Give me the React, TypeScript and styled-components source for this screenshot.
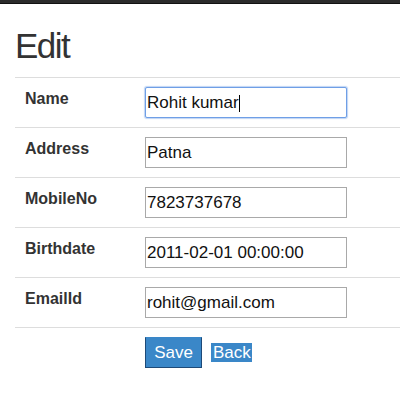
import React, { FC } from "react";
import styled, { createGlobalStyle } from "styled-components";

const GlobalStyle = createGlobalStyle`
  body {
    margin: 0;
    overflow: hidden;
    background: #fff;
    font-family: "Liberation Sans", Arial, sans-serif;
    color: #333;
  }
`;

interface Field {
  label: string;
  value: string;
}

const fields: Field[] = [
  { label: "Name", value: "Rohit kumar" },
  { label: "Address", value: "Patna" },
  { label: "MobileNo", value: "7823737678" },
  { label: "Birthdate", value: "2011-02-01 00:00:00" },
  { label: "EmailId", value: "rohit@gmail.com" },
];

const App: FC = () => {
  return (
    <>
      <GlobalStyle />
      <TopBar />
      <Container>
        <Title>Edit</Title>
        <Table>
          <tbody>
            {fields.map((f, i) => (
              <Row key={f.label}>
                <LabelCell>{f.label}</LabelCell>
                <InputCell>
                  <InputWrap>
                    <TextInput
                      type="text"
                      defaultValue={f.value}
                      $focused={i === 0}
                    />
                    {i === 0 && <Caret />}
                  </InputWrap>
                </InputCell>
              </Row>
            ))}
            <Row>
              <LabelCell />
              <InputCell>
                <Actions>
                  <SaveButton type="button">Save</SaveButton>
                  <BackLink>Back</BackLink>
                </Actions>
              </InputCell>
            </Row>
          </tbody>
        </Table>
      </Container>
    </>
  );
};

const TopBar = styled.div`
  height: 3px;
  background: #2b2b2b;
  border-bottom: 1px solid #111;
`;

const Container = styled.div`
  padding-left: 15px;
`;

const Title = styled.h2`
  margin: 22px 0 11px;
  font-size: 35px;
  line-height: 40px;
  font-weight: 400;
  letter-spacing: -1.5px;
  color: #333;
`;

const Table = styled.table`
  width: 385px;
  border-collapse: collapse;
`;

const Row = styled.tr`
  border-top: 1px solid #ddd;
`;

const LabelCell = styled.td`
  width: 100px;
  padding: 11px 10px 9px;
  vertical-align: top;
  font-size: 16px;
  line-height: 20px;
  font-weight: 700;
  color: #333;
`;

const InputCell = styled.td`
  padding: 9px 10px;
  vertical-align: top;
`;

const InputWrap = styled.div`
  position: relative;
  width: 202px;
`;

const TextInput = styled.input<{ $focused?: boolean }>`
  box-sizing: border-box;
  display: block;
  width: 202px;
  height: 31px;
  padding: 0 1px;
  margin: 0;
  font-family: "Liberation Sans", Arial, sans-serif;
  font-size: 17px;
  color: #111;
  background: #fff;
  border: 1px solid ${(p) => (p.$focused ? "#6f9fe6" : "#a9a9a9")};
  border-radius: ${(p) => (p.$focused ? "2px" : "0")};
  box-shadow: ${(p) => (p.$focused ? "0 0 1px 1px rgba(111,159,230,0.45)" : "none")};
  outline: none;
  caret-color: transparent;
`;

const Caret = styled.span`
  position: absolute;
  left: 94px;
  top: 8px;
  width: 1px;
  height: 17px;
  background: #000;
`;

const Actions = styled.div`
  display: flex;
  align-items: center;
  gap: 9px;
`;

const SaveButton = styled.button`
  box-sizing: border-box;
  width: 57px;
  height: 31px;
  padding: 0;
  font-family: "Liberation Sans", Arial, sans-serif;
  font-size: 17px;
  color: #fff;
  background: #3a87c8;
  border: 1px solid #1d4a78;
  border-top-color: #3a87c8;
  border-radius: 0;
`;

const BackLink = styled.span`
  display: inline-block;
  padding: 0 1px 0 2px;
  font-size: 17px;
  line-height: 19px;
  color: #fff;
  background: #3a87c8;
`;

export default App;
